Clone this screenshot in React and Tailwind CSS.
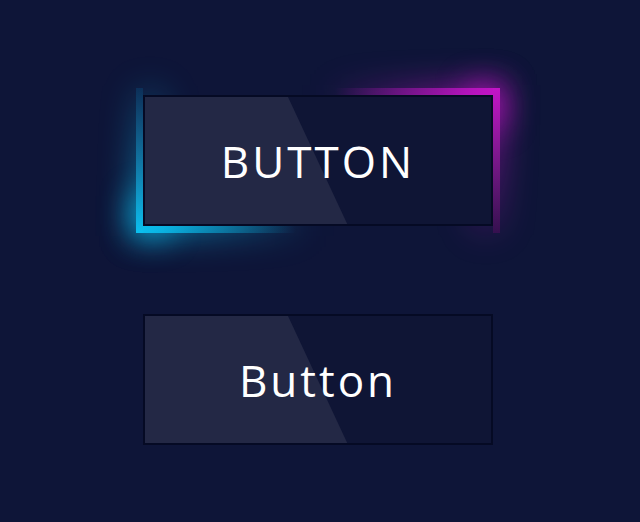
import React from 'react';

const font = { fontFamily: '"Open Sans", "Noto Sans", sans-serif' };

function GlassButton({ label }) {
  return (
    <button
      className="relative w-[350px] h-[131px] overflow-hidden border-2 border-[#050a24] bg-[#0f1535] text-white text-[44px] font-normal tracking-[3px]"
      style={font}
    >
      <span className="absolute top-0 bottom-0 left-[-60px] w-[203px] origin-top-left skew-x-[25deg] bg-[#232845]" />
      <span className="relative">{label}</span>
    </button>
  );
}

function NeonFrame({ children }) {
  return (
    <div className="relative">
      {/* glow */}
      <div className="absolute -top-[10px] -right-[10px] h-[40px] w-[180px] bg-gradient-to-r from-transparent to-[#c414c8]/70 blur-[16px]" />
      <div className="absolute -top-[10px] -right-[10px] w-[34px] h-[150px] bg-gradient-to-b from-[#c414c8]/70 to-[#c414c8]/10 blur-[16px]" />
      <div className="absolute -bottom-[10px] -left-[10px] h-[40px] w-[180px] bg-gradient-to-r from-[#0ac0f0]/70 to-transparent blur-[16px]" />
      <div className="absolute -bottom-[10px] -left-[10px] w-[34px] h-[150px] bg-gradient-to-t from-[#0ac0f0]/70 to-[#0ac0f0]/10 blur-[16px]" />
      {/* edges */}
      <div className="absolute -top-[7px] -right-[7px] h-[7px] w-[165px] bg-gradient-to-r from-transparent to-[#c414c8]" />
      <div className="absolute -top-[7px] -right-[7px] w-[7px] h-[145px] bg-gradient-to-b from-[#c414c8] to-[#35104f]" />
      <div className="absolute -bottom-[7px] -left-[7px] h-[7px] w-[160px] bg-gradient-to-r from-[#0ac0f0] to-transparent" />
      <div className="absolute -bottom-[7px] -left-[7px] w-[7px] h-[145px] bg-gradient-to-t from-[#0ac0f0] to-[#0c2f58]" />
      <div className="relative">{children}</div>
    </div>
  );
}

export default function App() {
  return (
    <div className="w-[640px] h-[522px] bg-[#0e1538] overflow-hidden flex flex-col items-start pl-[143px] pt-[95px] gap-[88px]">
      <NeonFrame>
        <GlassButton label="BUTTON" />
      </NeonFrame>
      <GlassButton label="Button" />
    </div>
  );
}
